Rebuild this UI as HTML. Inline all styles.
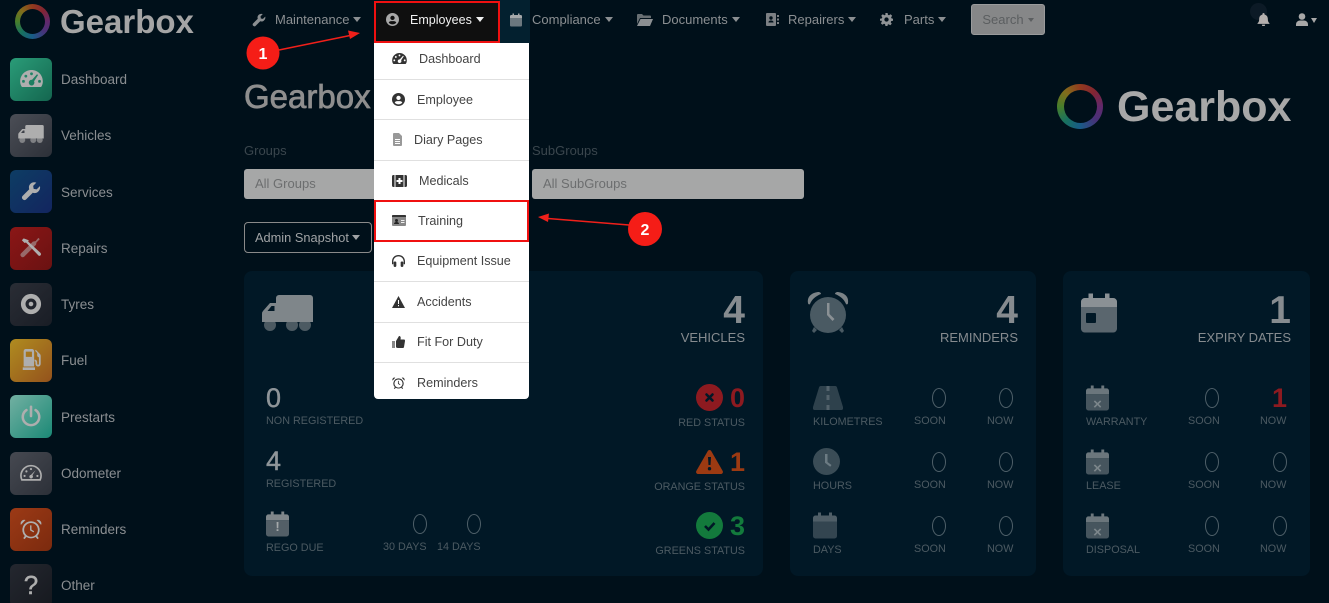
<!DOCTYPE html>
<html><head><meta charset="utf-8"><title>Gearbox</title>
<style>
html,body{margin:0;padding:0;width:1329px;height:603px;overflow:hidden;background:#00101a}
body{position:relative;font-family:"Liberation Sans",sans-serif}
.a,.t,.o,svg.i,.r{position:absolute}
.t{white-space:nowrap;line-height:16px;height:16px}
.r{white-space:nowrap;line-height:16px;height:16px;text-align:right}
.tile{position:absolute;left:10px;width:42px;height:43px;border-radius:6px}
.tile svg{position:absolute;left:10px;top:10px;width:22px;height:22px;fill:#aeaeae}
.side{font-size:13.5px;left:61px;color:#8a8e91;margin-top:1px}
.nav{font-size:13px;top:12px;color:#8b8f92}
.nav b,.btn b{display:inline-block;width:0;height:0;border:4px solid transparent;border-top:5px solid currentColor;border-bottom:0;margin-left:4px;vertical-align:2px;font-size:0}
.card{position:absolute;top:271px;height:305px;background:#011826;border-radius:8px}
.s{font-size:10.8px;color:#4c5a62;margin-top:1px}
.big{font-size:39px;font-weight:bold;color:#868b8f;line-height:40px;height:40px}
.h{font-size:13px;color:#868b8f}
.o{width:12px;height:18px;border:1px solid #4e5f68;border-radius:50%;color:transparent;font-size:10px;line-height:18px;text-align:center;overflow:hidden}
.n{font-size:27px;line-height:28px;height:28px}
.m{font-size:12.6px;color:#444;z-index:3}
.div{position:absolute;left:374px;width:155px;height:1px;background:#e0e0e0;z-index:3}
svg.i{z-index:3}
.lab{font-size:13px;color:#3a464d}
.ring{position:absolute;border-radius:50%;opacity:.8;background:conic-gradient(#b5451f 0deg,#a32a3a 45deg,#7a2f80 90deg,#5a3a90 130deg,#1f6fa3 180deg,#1f8a70 225deg,#5a9a30 270deg,#a3851d 315deg,#b5451f 360deg)}
.ring i{position:absolute;border-radius:50%;background:#00101a}
</style></head><body>
<svg width="0" height="0" style="position:absolute">
<symbol id="gauge" viewBox="0 0 24 18"><path fill-rule="evenodd" d="M12 0C5.400 0 0 5.200 0 12c0 2 .5 3.700 1.300 5.200.2.500.7.800 1.300.800h18.800c.6 0 1.100-.3 1.300-.8.800-1.500 1.300-3.200 1.300-5.200C24 5.200 18.600 0 12 0zM12 2.500a1.500 1.500 0 1 1 0 3 1.500 1.500 0 0 1 0-3zM6 5a1.500 1.500 0 1 1 0 3 1.500 1.500 0 0 1 0-3zM3.500 10.500a1.500 1.500 0 1 1 0 3 1.500 1.500 0 0 1 0-3zM20.500 10.500a1.500 1.500 0 1 1 0 3 1.500 1.500 0 0 1 0-3zM17.800 4.500l1.200.8-4.300 6.600c.3.500.4 1 .4 1.500a3 3 0 1 1-2.600-3z"/></symbol>
<symbol id="truck" viewBox="0 0 51 36"><path fill-rule="evenodd" d="M14 8H8L1 16Q0 17 0 19V27H51V3a3 3 0 0 0-3-3H17a3 3 0 0 0-3 3zM5.500 16H12.500V11H9.500z"/><g opacity=".6"><circle cx="8" cy="30" r="6"/><circle cx="30" cy="30" r="6"/><circle cx="43" cy="30" r="6"/></g></symbol>
<symbol id="wrench" viewBox="0 0 24 24"><path d="M22.700 6.200 18.800 10l-3.600-.6-.6-3.600 3.800-3.900C15.500.9 12.300 1.800 10.700 4c-1.400 1.800-1.500 4-.8 5.900L1.800 18a3 3 0 0 0 4.200 4.200l8.100-8.100c2 .7 4.200.5 6-.9 2.300-1.700 3.300-4.700 2.600-7z"/></symbol>
<symbol id="user" viewBox="0 0 24 24"><path fill-rule="evenodd" d="M12 0a12 12 0 1 0 0 24 12 12 0 0 0 0-24zm0 5a4 4 0 1 1 0 8 4 4 0 0 1 0-8zm0 16c-2.800 0-5.300-1.200-7-3.200.8-1.600 2.500-2.800 4.500-2.800h5c2 0 3.700 1.200 4.500 2.800-1.700 2-4.200 3.200-7 3.200z"/></symbol>
<symbol id="cal" viewBox="0 0 24 26"><path d="M5 0h3v3h8V0h3v3h2.500A2.500 2.500 0 0 1 24 5.500V9H0V5.500A2.500 2.500 0 0 1 2.500 3H5z"/><path opacity=".65" d="M0 9h24v14.500a2.500 2.500 0 0 1-2.500 2.500h-19A2.500 2.500 0 0 1 0 23.500z"/></symbol>
<symbol id="alarm" viewBox="0 0 24 24"><path fill-rule="evenodd" d="M12 3.500a9.500 9.500 0 0 0-6.800 16.100L3.500 22l1.500 1 2-2.300a9.500 9.500 0 0 0 10 0l2 2.300 1.500-1-1.700-2.400A9.500 9.500 0 0 0 12 3.500zm0 2a7.500 7.500 0 1 1 0 15 7.500 7.500 0 0 1 0-15zM11 8v5.500l3.700 2.200.8-1.200-3-1.800V8zM1 7.500a4 4 0 0 1 5-5.300zM23 7.500a4 4 0 0 0-5-5.300z"/></symbol>
<symbol id="tyre" viewBox="0 0 24 24"><path fill-rule="evenodd" d="M12 1a11 11 0 1 0 0 22 11 11 0 0 0 0-22zm0 5a6 6 0 1 1 0 12 6 6 0 0 1 0-12zm0 3.500a2.500 2.500 0 1 0 0 5 2.500 2.500 0 0 0 0-5z"/></symbol>
<symbol id="fuel" viewBox="0 0 24 24"><path fill-rule="evenodd" d="M3 2.500A2.500 2.500 0 0 1 5.500 0h7A2.500 2.500 0 0 1 15 2.500V20H3zM5.500 3v6h7V3zM2 21h14v3H2zM17 1l4.500 4.500c.6.600 1 1.400 1 2.300V17a3 3 0 0 1-6 0v-2c0-.6-.4-1-1-1v-2a3 3 0 0 1 3 3v2a1 1 0 0 0 2 0V9.500a2.500 2.500 0 0 1-2-2.500V4.500L16 2z"/></symbol>
</svg>

<!-- Logo left -->
<div class="ring" style="left:15px;top:4px;width:35px;height:35px"><i style="left:5px;top:5px;width:25px;height:25px"></i></div>
<div class="t" style="left:60px;top:3px;height:38px;line-height:38px;font-size:33px;font-weight:bold;color:#a5a5a5">Gearbox</div>

<!-- Sidebar -->
<div class="tile" style="top:58px;background:linear-gradient(135deg,#2a9c78,#14664f)"><svg style="top:12px;height:17px;width:23px"><use href="#gauge" width="23" height="17"/></svg></div>
<div class="t side" style="top:71px">Dashboard</div>
<div class="tile" style="top:114px;background:linear-gradient(135deg,#4b4e56,#2c3038)"><svg style="left:8px;top:11px;width:26px;height:18px"><use href="#truck" width="26" height="18"/></svg></div>
<div class="t side" style="top:127px">Vehicles</div>
<div class="tile" style="top:170px;background:linear-gradient(135deg,#0d3d64,#13255f)"><svg style="left:11px;top:11px;width:20px;height:20px"><use href="#wrench" width="20" height="20"/></svg></div>
<div class="t side" style="top:184px">Services</div>
<div class="tile" style="top:227px;background:linear-gradient(135deg,#8b1616,#6a1212)"><svg viewBox="0 0 24 24"><path opacity=".55" d="M21.500 2.500 18 6l-.5 2.500-13 13a2.500 2.500 0 0 1-3.500-3.500l13-13L17 4.500 20 1a6 6 0 0 1 1.500 1.500z"/><path d="M4 1.500 2 3.500l3 3 1.500-.5L20 20c1 1.500 4 0 2.500-2.500L9 5l.5-1.500z"/></svg></div>
<div class="t side" style="top:240px">Repairs</div>
<div class="tile" style="top:283px;background:linear-gradient(135deg,#2a2d35,#191d25)"><svg viewBox="0 0 24 24"><use href="#tyre"/></svg></div>
<div class="t side" style="top:296px">Tyres</div>
<div class="tile" style="top:339px;background:linear-gradient(135deg,#b08c20,#94521c)"><svg style="left:11px;top:10px;width:21px;height:21px"><use href="#fuel" width="21" height="21"/></svg></div>
<div class="t side" style="top:352px">Fuel</div>
<div class="tile" style="top:395px;background:linear-gradient(135deg,#72b0a2,#1b8976)"><svg viewBox="0 0 24 24"><path fill="none" stroke="#aeaeae" stroke-width="2.800" stroke-linecap="round" d="M12 2v10M7 5.500a9 9 0 1 0 10 0"/></svg></div>
<div class="t side" style="top:409px">Prestarts</div>
<div class="tile" style="top:452px;background:linear-gradient(135deg,#464951,#2c3038)"><svg viewBox="0 2 24 18"><path fill="none" stroke="#aeaeae" stroke-width="1.800" d="M12 3C6 3 1 8 1 14c0 2 .4 3 1 4.500h20c.6-1.500 1-2.500 1-4.500 0-6-5-11-11-11z"/><path d="M12 5.500a1.200 1.200 0 1 1 0 2.400 1.200 1.200 0 0 1 0-2.400zM7 8a1.200 1.200 0 1 1 0 2.400A1.200 1.200 0 0 1 7 8zM5 13a1.200 1.200 0 1 1 0 2.400 1.200 1.200 0 0 1 0-2.400zM19 13a1.200 1.200 0 1 1 0 2.400 1.200 1.200 0 0 1 0-2.400zM17 8l-3.500 5.500a2 2 0 1 1-1.500-.5z"/></svg></div>
<div class="t side" style="top:465px">Odometer</div>
<div class="tile" style="top:508px;background:linear-gradient(135deg,#9c3a16,#7b2a0e)"><svg viewBox="0 0 24 24"><use href="#alarm"/></svg></div>
<div class="t side" style="top:521px">Reminders</div>
<div class="tile" style="top:564px;background:linear-gradient(135deg,#24272f,#16191f)"><div class="t" style="left:0;width:42px;text-align:center;top:9px;line-height:24px;height:24px;font-size:26px;color:#aeaeae;-webkit-text-stroke:.4px #aeaeae">?</div></div>
<div class="t side" style="top:577px">Other</div>

<!-- Top nav -->
<svg class="i" style="left:252px;top:13px;fill:#8b8f92" width="14" height="14"><use href="#wrench" width="14" height="14"/></svg>
<div class="t nav" style="left:275px">Maintenance<b></b></div>
<div class="a" style="left:374px;top:1px;width:122px;height:38px;background:#0f0f0f;border:2px solid #f01010;z-index:4"></div>
<svg class="i" style="left:386px;top:13px;fill:#a8a8a8;z-index:5" width="13" height="13"><use href="#user" width="13" height="13"/></svg>
<div class="t nav" style="left:410px;color:#f1f1f1;z-index:5;font-size:12.5px">Employees<b></b></div>
<div class="a" style="left:499px;top:0;width:31px;height:43px;background:#03202f"></div>
<svg class="i" style="left:510px;top:13px;fill:#a5a8aa" width="12" height="14"><use href="#cal" width="12" height="14"/></svg>
<div class="t nav" style="left:532px">Compliance<b></b></div>
<svg class="i" style="left:637px;top:14px;fill:#8b8f92" width="16" height="12" viewBox="0 0 16 12"><path opacity=".75" d="M0 1a1 1 0 0 1 1-1h4l1.500 1.500H13a1 1 0 0 1 1 1V4H3L0 10z"/><path d="M3.500 5H16l-3 7H0z"/></svg>
<div class="t nav" style="left:662px">Documents<b></b></div>
<svg class="i" style="left:766px;top:13px" width="13" height="13" viewBox="0 0 13 13"><path fill="#7c8084" d="M1 0h8a1 1 0 0 1 1 1v11a1 1 0 0 1-1 1H1a1 1 0 0 1-1-1V1a1 1 0 0 1 1-1z"/><circle cx="5" cy="5" r="1.700" fill="#00101a"/><path fill="#00101a" d="M2.500 9.500C2.500 8 3.500 7.500 5 7.500s2.500.5 2.500 2z"/><path fill="#7c8084" d="M11 2h2v2h-2zM11 5.500h2v2h-2zM11 9h2v2h-2z"/></svg>
<div class="t nav" style="left:788px">Repairers<b></b></div>
<svg class="i" style="left:880px;top:13px;fill:#8f9396" width="13" height="13" viewBox="0 0 24 24"><path fill-rule="evenodd" d="M10 0h4l.7 3.400 2 .8L19.600 2.300l2.800 2.800-1.900 2.900.8 2L24 10.700v3.600l-3.400.7-.8 2 1.900 2.900-2.800 2.800-2.900-1.900-2 .8L14 24h-4l-.7-3.400-2-.8-2.900 1.900-2.800-2.800 1.900-2.900-.8-2L0 14.300v-3.600l3.400-.7.8-2L2.300 5.100l2.800-2.800L8 4.200l2-.8zM12 8a4 4 0 1 0 0 8 4 4 0 0 0 0-8z"/></svg>
<div class="t nav" style="left:904px">Parts<b></b></div>
<div class="a btn" style="left:971px;top:4px;width:72px;height:29px;background:#868788;border:1px solid #9a9b9c;border-radius:3px;color:#5b5e60;font-size:13px;line-height:29px;text-align:center">Search<b style="border-width:3px;border-top-width:4px;vertical-align:2px"></b></div>
<div class="a" style="left:1250px;top:3px;width:17px;height:17px;border-radius:50%;background:#0c1a26"></div>
<svg class="i" style="left:1257px;top:13px;fill:#b5b0ae" width="13" height="13" viewBox="0 0 24 24"><path d="M12 0a2 2 0 0 1 2 2v1c4 1 6 4 6 8 0 4 1 6 3 8v1H1v-1c2-2 3-4 3-8 0-4 2-7 6-8V2a2 2 0 0 1 2-2zM9 21.500h6a3 3 0 0 1-6 0z"/></svg>
<svg class="i" style="left:1296px;top:13px;fill:#a8a8a8" width="12" height="13" viewBox="0 0 12 13"><circle cx="6" cy="3.500" r="3.300"/><path d="M0 13v-1.500C0 9 2 7.500 4 7.500h4c2 0 4 1.500 4 4V13z"/></svg>
<div class="a" style="left:1311px;top:18px;width:0;height:0;border:3.500px solid transparent;border-top:5px solid #a8a8a8;border-bottom:0"></div>

<!-- Page head -->
<div class="t" style="left:244px;top:77px;height:40px;line-height:40px;font-size:33px;color:#8e8e8e;-webkit-text-stroke:.7px #8e8e8e">Gearbox</div>
<div class="ring" style="left:1057px;top:84px;width:46px;height:45px"><i style="left:6.500px;top:6px;width:33px;height:33px"></i></div>
<div class="t" style="left:1117px;top:83px;height:48px;line-height:48px;font-size:43px;font-weight:bold;color:#a8a8a8">Gearbox</div>

<div class="t lab" style="left:244px;top:143px">Groups</div>
<div class="a" style="left:244px;top:169px;width:140px;height:30px;background:#a6a7a7;border-radius:3px;color:#6c6e6f;font-size:13px;line-height:30px;text-indent:11px">All Groups</div>
<div class="t lab" style="left:532px;top:143px">SubGroups</div>
<div class="a" style="left:532px;top:169px;width:272px;height:30px;background:#a6a7a7;border-radius:3px;color:#6c6e6f;font-size:13px;line-height:30px;text-indent:11px">All SubGroups</div>
<div class="a btn" style="left:244px;top:222px;width:126px;height:29px;border:1px solid #8a8a8a;border-radius:4px;color:#a0a3a5;font-size:12.8px;line-height:29px;text-indent:10px;white-space:nowrap">Admin Snapshot<b style="margin-left:3px"></b></div>

<!-- Cards -->
<div class="card" style="left:244px;width:519px"></div>
<div class="card" style="left:790px;width:246px"></div>
<div class="card" style="left:1063px;width:247px"></div>

<!-- Card 1 -->
<svg class="a" style="left:262px;top:295px;fill:#7f868a" width="51" height="36"><use href="#truck" width="51" height="36"/></svg>
<div class="t n" style="left:266px;top:384px;color:#8f9599;-webkit-text-stroke:.4px #8f9599">0</div>
<div class="t s" style="left:266px;top:412px">NON REGISTERED</div>
<div class="t n" style="left:266px;top:447px;color:#8f9599;-webkit-text-stroke:.4px #8f9599">4</div>
<div class="t s" style="left:266px;top:475px">REGISTERED</div>
<svg class="a" style="left:266px;top:511px;fill:#7f868a" width="23" height="26"><use href="#cal" width="23" height="26"/></svg>
<div class="t" style="left:266px;top:519px;width:23px;text-align:center;font-size:13px;font-weight:bold;color:#a5a9ab">!</div>
<div class="t s" style="left:266px;top:539px">REGO DUE</div>
<div class="o" style="left:413px;top:514px">0</div><div class="t s" style="left:383px;top:538px">30 DAYS</div>
<div class="o" style="left:467px;top:514px">0</div><div class="t s" style="left:437px;top:538px">14 DAYS</div>
<div class="r big" style="right:584px;top:291px">4</div>
<div class="r h" style="right:584px;top:330px">VEHICLES</div>
<svg class="a" style="left:696px;top:384px" width="27" height="27" viewBox="0 0 27 27"><circle cx="13.500" cy="13.500" r="13.500" fill="#8d1a20"/><path d="M10.500 10.500l6 6M16.500 10.500l-6 6" stroke="#011826" stroke-width="2.600" stroke-linecap="round"/></svg>
<div class="r n" style="right:584px;top:384px;color:#8d1a20;font-weight:bold">0</div>
<div class="r s" style="right:584px;top:414px">RED STATUS</div>
<svg class="a" style="left:696px;top:450px" width="27" height="24" viewBox="0 0 27 24"><path d="M13.500 0c.7 0 1.300.4 1.700 1l11.500 20c.7 1.300-.2 3-1.700 3H2c-1.500 0-2.400-1.700-1.700-3L11.800 1c.4-.6 1-1 1.700-1z" fill="#9c3a12"/><path d="M12 7h3l-.5 8h-2zM13.500 17a1.700 1.700 0 1 1 0 3.400 1.700 1.700 0 0 1 0-3.400z" fill="#011826"/></svg>
<div class="r n" style="right:584px;top:448px;color:#9c3a12;font-weight:bold">1</div>
<div class="r s" style="right:584px;top:478px">ORANGE STATUS</div>
<svg class="a" style="left:696px;top:512px" width="27" height="27" viewBox="0 0 27 27"><circle cx="13.500" cy="13.500" r="13.500" fill="#137a3c"/><path d="M9 14l3.500 3.500 6-6.500" fill="none" stroke="#011826" stroke-width="2.600"/></svg>
<div class="r n" style="right:584px;top:512px;color:#137a3c;font-weight:bold">3</div>
<div class="r s" style="right:584px;top:542px">GREENS STATUS</div>

<!-- Card 2 -->
<svg class="a" style="left:807px;top:292px" width="42" height="42" viewBox="0 0 42 42"><path fill="#7c8387" d="M1 11C0 5 4 1 11 0c2 0 3 1 3 2C9 4 5 7 3 12c-1 1-2 0-2-1zM41 11c1-6-3-10-10-11-2 0-3 1-3 2 5 2 9 5 11 10 1 1 2 0 2-1z"/><circle cx="21" cy="23" r="18" fill="#4a5a63"/><path d="M7 35l3 3-3 3-2-2zM35 35l-3 3 3 3 2-2z" fill="#4a5a63"/><path d="M20 11h2.500v11l5 5-2 2-5.500-6z" fill="#8b9195"/></svg>
<div class="r big" style="right:311px;top:291px">4</div>
<div class="r h" style="right:311px;top:330px">REMINDERS</div>
<svg class="a" style="left:813px;top:386px" width="30" height="24" viewBox="0 0 30 24"><path d="M8 0H22a2 2 0 0 1 2 1.500L30 21a2 2 0 0 1-2 3H2a2 2 0 0 1-2-3L6 1.500A2 2 0 0 1 8 0z" fill="#2e414c"/><path d="M13.500 0h3v5h-3zM13.500 9h3v5h-3zM13.500 19h3v5h-3z" fill="#54636c"/></svg>
<div class="t s" style="left:813px;top:413px">KILOMETRES</div>
<svg class="a" style="left:813px;top:448px" width="27" height="27" viewBox="0 0 27 27"><circle cx="13.500" cy="13.500" r="13.500" fill="#3a4c56"/><path d="M12 6h2.500v8l4 3-1.300 1.700-5.200-4z" fill="#6c7b83"/></svg>
<div class="t s" style="left:813px;top:477px">HOURS</div>
<svg class="a" style="left:813px;top:512px;fill:#4f5e67" width="24" height="27"><use href="#cal" width="24" height="27"/></svg>
<div class="t s" style="left:813px;top:541px">DAYS</div>

<div class="o" style="left:932px;top:388px">0</div><div class="o" style="left:999px;top:388px">0</div>
<div class="t s" style="left:914px;top:412px">SOON</div><div class="t s" style="left:987px;top:412px">NOW</div>
<div class="o" style="left:932px;top:452px">0</div><div class="o" style="left:999px;top:452px">0</div>
<div class="t s" style="left:914px;top:476px">SOON</div><div class="t s" style="left:987px;top:476px">NOW</div>
<div class="o" style="left:932px;top:516px">0</div><div class="o" style="left:999px;top:516px">0</div>
<div class="t s" style="left:914px;top:540px">SOON</div><div class="t s" style="left:987px;top:540px">NOW</div>

<!-- Card 3 -->
<svg class="a" style="left:1081px;top:293px;fill:#8b9195" width="36" height="40"><use href="#cal" width="36" height="40"/></svg>
<div class="a" style="left:1086px;top:313px;width:10px;height:10px;background:#011826;border-radius:1px"></div>
<div class="r big" style="right:38px;top:291px">1</div>
<div class="r h" style="right:38px;top:330px">EXPIRY DATES</div>

<svg class="a" style="left:1086px;top:385px;fill:#6b767c" width="23" height="26"><use href="#cal" width="23" height="26"/></svg>
<div class="t" style="left:1086px;top:397px;width:23px;text-align:center;font-size:15px;font-weight:bold;color:#7c868b">×</div>
<div class="t s" style="left:1086px;top:413px">WARRANTY</div>
<svg class="a" style="left:1086px;top:449px;fill:#6b767c" width="23" height="26"><use href="#cal" width="23" height="26"/></svg>
<div class="t" style="left:1086px;top:461px;width:23px;text-align:center;font-size:15px;font-weight:bold;color:#7c868b">×</div>
<div class="t s" style="left:1086px;top:477px">LEASE</div>
<svg class="a" style="left:1086px;top:513px;fill:#6b767c" width="23" height="26"><use href="#cal" width="23" height="26"/></svg>
<div class="t" style="left:1086px;top:525px;width:23px;text-align:center;font-size:15px;font-weight:bold;color:#7c868b">×</div>
<div class="t s" style="left:1086px;top:541px">DISPOSAL</div>

<div class="o" style="left:1205px;top:388px">0</div><div class="r n" style="right:42px;top:384px;color:#8d1a20;font-weight:bold">1</div>
<div class="t s" style="left:1260px;top:412px">NOW</div><div class="t s" style="left:1188px;top:412px">SOON</div>
<div class="o" style="left:1205px;top:452px">0</div><div class="o" style="left:1273px;top:452px">0</div>
<div class="t s" style="left:1188px;top:476px">SOON</div><div class="t s" style="left:1260px;top:476px">NOW</div>
<div class="o" style="left:1205px;top:516px">0</div><div class="o" style="left:1273px;top:516px">0</div>
<div class="t s" style="left:1188px;top:540px">SOON</div><div class="t s" style="left:1260px;top:540px">NOW</div>

<!-- Dropdown -->
<div class="a" style="left:374px;top:43px;width:155px;height:356px;background:#fff;border-radius:0 0 4px 4px;z-index:2"></div>
<div class="div" style="top:79px"></div><div class="div" style="top:119px"></div><div class="div" style="top:160px"></div><div class="div" style="top:281px"></div><div class="div" style="top:322px"></div><div class="div" style="top:362px"></div>
<svg class="i" style="left:392px;top:53px;fill:#333" width="15" height="11"><use href="#gauge" width="15" height="11"/></svg>
<div class="t m" style="left:419px;top:51px">Dashboard</div>
<svg class="i" style="left:392px;top:93px;fill:#333" width="13" height="13"><use href="#user" width="13" height="13"/></svg>
<div class="t m" style="left:417px;top:92px">Employee</div>
<svg class="i" style="left:393px;top:133px;fill:#999" width="9" height="13" viewBox="0 0 9 13"><path fill-rule="evenodd" d="M1 0h5l3 3v9a1 1 0 0 1-1 1H1a1 1 0 0 1-1-1V1a1 1 0 0 1 1-1zm1 6v1h5V6zm0 2v1h5V8zm0 2v1h5v-1z"/></svg>
<div class="t m" style="left:414px;top:132px">Diary Pages</div>
<svg class="i" style="left:392px;top:175px" width="15" height="12" viewBox="0 0 15 12"><rect width="15" height="12" rx="1.500" fill="#333"/><path d="M2.500 0h1v12h-1zM11.500 0h1v12h-1z" fill="#fff"/><path d="M6.500 3h2v2h2v2h-2v2h-2V7h-2V5h2z" fill="#fff"/></svg>
<div class="t m" style="left:419px;top:173px">Medicals</div>
<svg class="i" style="left:392px;top:215px" width="14" height="11" viewBox="0 0 14 11"><path fill="#888" d="M1 0h12a1 1 0 0 1 1 1v9a1 1 0 0 1-1 1H1a1 1 0 0 1-1-1V1a1 1 0 0 1 1-1z"/><path fill="#333" d="M0 1a1 1 0 0 1 1-1h12a1 1 0 0 1 1 1v1H0z"/><circle cx="4.500" cy="5.500" r="1.500" fill="#222"/><path d="M2 9c0-1.300 1-2 2.500-2S7 7.700 7 9z" fill="#222"/><path d="M9 5h3.500v1H9zM9 7h3.500v1H9z" fill="#eee"/></svg>
<div class="t m" style="left:418px;top:213px">Training</div>
<svg class="i" style="left:392px;top:255px;fill:#333" width="13" height="12" viewBox="0 0 24 22"><path d="M12 0C5 0 0 5 0 12v5h2.500v-5C2.500 6.500 6.500 2.500 12 2.500S21.500 6.500 21.500 12v5H24v-5C24 5 19 0 12 0z"/><rect x="3" y="12" width="5" height="10" rx="2"/><rect x="16" y="12" width="5" height="10" rx="2"/></svg>
<div class="t m" style="left:417px;top:253px">Equipment Issue</div>
<svg class="i" style="left:392px;top:296px" width="13" height="12" viewBox="0 0 13 12"><path fill="#333" d="M6.500 0 13 12H0z"/><path fill="#fff" d="M6 4h1v4H6zM6 9h1v1.200H6z"/></svg>
<div class="t m" style="left:417px;top:294px">Accidents</div>
<svg class="i" style="left:392px;top:336px" width="13" height="12" viewBox="0 0 13 12"><rect y="5" width="3" height="7" fill="#888"/><path fill="#333" d="M4 5l3-5c1.500 0 2 1 1.500 3.500H12c1 0 1 1 1 1.500l-1 6c0 .6-.6 1-1 1H6c-1 0-2-.5-2-1z"/></svg>
<div class="t m" style="left:417px;top:334px">Fit For Duty</div>
<svg class="i" style="left:392px;top:376px;fill:#333" width="13" height="14"><use href="#alarm" width="13" height="14"/></svg>
<div class="t m" style="left:417px;top:375px">Reminders</div>
<div class="a" style="left:374px;top:200px;width:151px;height:38px;border:2px solid #f01010;z-index:4"></div>

<!-- Annotations -->
<svg class="a" style="left:0;top:0;z-index:6" width="1329" height="603">
<path d="M279 50 350 35.500" stroke="#f0201a" stroke-width="1.500"/><path d="M360 33 348 30.500 350 39z" fill="#f0201a"/>
<circle cx="263" cy="53" r="16.500" fill="#f51d17"/>
<path d="M629 225 548 218.500" stroke="#f0201a" stroke-width="1.500"/><path d="M538 217 549 213.500 548 222z" fill="#f0201a"/>
<circle cx="645" cy="229" r="17" fill="#f51d17"/>
<text x="263" y="59" text-anchor="middle" font-family="Liberation Sans" font-weight="bold" font-size="16" fill="#fff">1</text>
<text x="645" y="235" text-anchor="middle" font-family="Liberation Sans" font-weight="bold" font-size="16" fill="#fff">2</text>
</svg>
</body></html>
